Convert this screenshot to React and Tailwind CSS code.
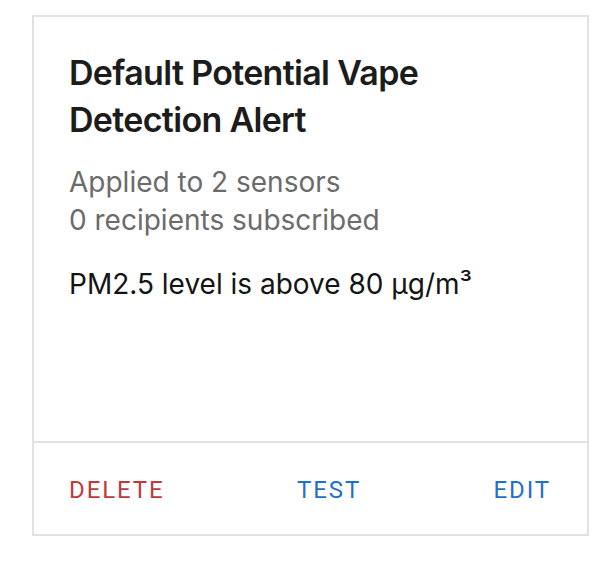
export default function App() {
  return (
    <div className="min-h-[564px] bg-white pt-[15px] pl-[32px]" style={{ fontFamily: 'Inter, "Noto Sans", sans-serif' }}>
      <div className="flex h-[521px] w-[557px] flex-col border-2 border-[#e2e2e2] bg-white">
        <div className="flex-1 px-[35px] pt-[32px]">
          <h2 className="text-[34px] font-semibold leading-[47px] tracking-[-0.02em] text-[#1c1c1c]">
            Default Potential Vape Detection Alert
          </h2>
          <div className="mt-[20px] text-[28px] leading-[38px] text-[#6b6b6b]">
            <p>Applied to 2 sensors</p>
            <p>0 recipients subscribed</p>
          </div>
          <p className="mt-[26px] text-[28px] leading-[38px] text-[#141414]">PM2.5 level is above 80 µg/m³</p>
        </div>
        <div
          className="flex h-[93px] items-center justify-between border-t-2 border-[#e2e2e2] pt-[3px] pl-[35px] pr-[36px] text-[24px] tracking-[0.08em]"
          style={{ fontFamily: 'Roboto, "Liberation Sans", sans-serif' }}
        >
          <button className="uppercase text-[#c0393b]">Delete</button>
          <button className="uppercase text-[#1f6fd1]">Test</button>
          <button className="uppercase text-[#1f6fd1]">Edit</button>
        </div>
      </div>
    </div>
  );
}
